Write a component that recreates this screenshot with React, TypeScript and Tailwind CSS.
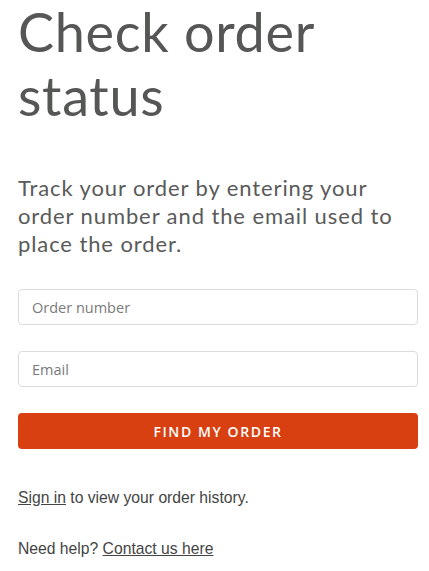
export default function App() {
  return (
    <div className="min-h-[571px] w-[429px] bg-white pl-[18px]">
      <div className="flex w-[400px] flex-col">
        <h1 className="font-['Lato',sans-serif] text-[54px] leading-[64px] font-normal tracking-[0.7px] text-[#555755]">
          Check order status
        </h1>
        <p className="mt-[46px] font-['Lato',sans-serif] text-[22px] leading-[28px] tracking-[0.9px] text-[#5a5a5a]">
          Track your order by entering your
          <br />
          order number and the email used to
          <br />
          place the order.
        </p>
        <form className="mt-[31px] flex flex-col gap-[26px]">
          <input
            type="text"
            placeholder="Order number"
            className="h-[36px] w-full rounded-[4px] border border-[#dcdcdc] px-[13px] font-['Open_Sans',sans-serif] text-[14.5px] text-[#333] outline-none placeholder:text-[#7a7a7a]"
          />
          <input
            type="email"
            placeholder="Email"
            className="h-[36px] w-full rounded-[4px] border border-[#dcdcdc] px-[13px] font-['Open_Sans',sans-serif] text-[14.5px] text-[#333] outline-none placeholder:text-[#7a7a7a]"
          />
          <button
            type="button"
            className="h-[36px] w-full rounded-[4px] bg-[#d84012] font-['Open_Sans',sans-serif] text-[14px] font-semibold tracking-[1.6px] text-white"
          >
            FIND MY ORDER
          </button>
        </form>
        <p className="mt-[40px] font-['Liberation_Sans',Arial,sans-serif] text-[15.7px] leading-[18px] text-[#444]">
          <a href="#" className="underline">Sign in</a> to view your order history.
        </p>
        <p className="mt-[33px] font-['Liberation_Sans',Arial,sans-serif] text-[15.7px] leading-[18px] text-[#444]">
          Need help? <a href="#" className="underline">Contact us here</a>
        </p>
      </div>
    </div>
  );
}
